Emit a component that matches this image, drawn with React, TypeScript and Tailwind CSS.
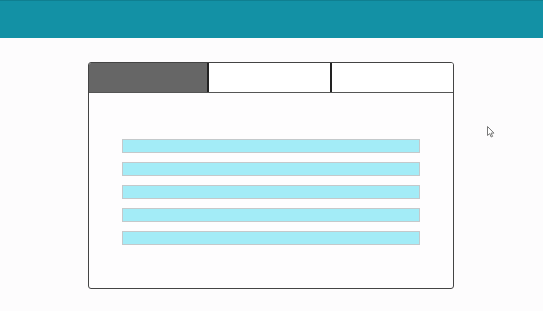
import React from 'react';

const rows = [0, 1, 2, 3, 4];

export default function App() {
  return (
    <div className="relative w-[543px] h-[311px] bg-[#fdfcfd] overflow-hidden">
      <div className="h-[38px] bg-[#1391a5] border-t border-[#0f7f90]" />

      <div className="ml-[88px] mt-[24px] w-[366px] h-[227px] border border-[#444] rounded-[3px] bg-[#fefdfe] overflow-hidden">
        <div className="flex h-[30px] border-b border-[#555]">
          <div className="w-[120px] bg-[#666666] border-r-2 border-[#222]" />
          <div className="w-[123px] bg-white border-r-2 border-[#222]" />
          <div className="flex-1 bg-white" />
        </div>
        <div className="pt-[46px] pl-[33px] flex flex-col gap-[9px]">
          {rows.map((r) => (
            <div key={r} className="w-[298px] h-[14px] bg-[#a3ecf7] border border-[#c4c9cb]" />
          ))}
        </div>
      </div>

      <svg className="absolute left-[487px] top-[126px]" width="8" height="12" viewBox="0 0 8 12">
        <path d="M0.5 0.5 L0.5 9.5 L2.7 7.6 L4.2 11 L5.6 10.4 L4.1 7.1 L7 7.1 Z" fill="#fff" stroke="#777" strokeWidth="1" strokeLinejoin="round" />
      </svg>
    </div>
  );
}
